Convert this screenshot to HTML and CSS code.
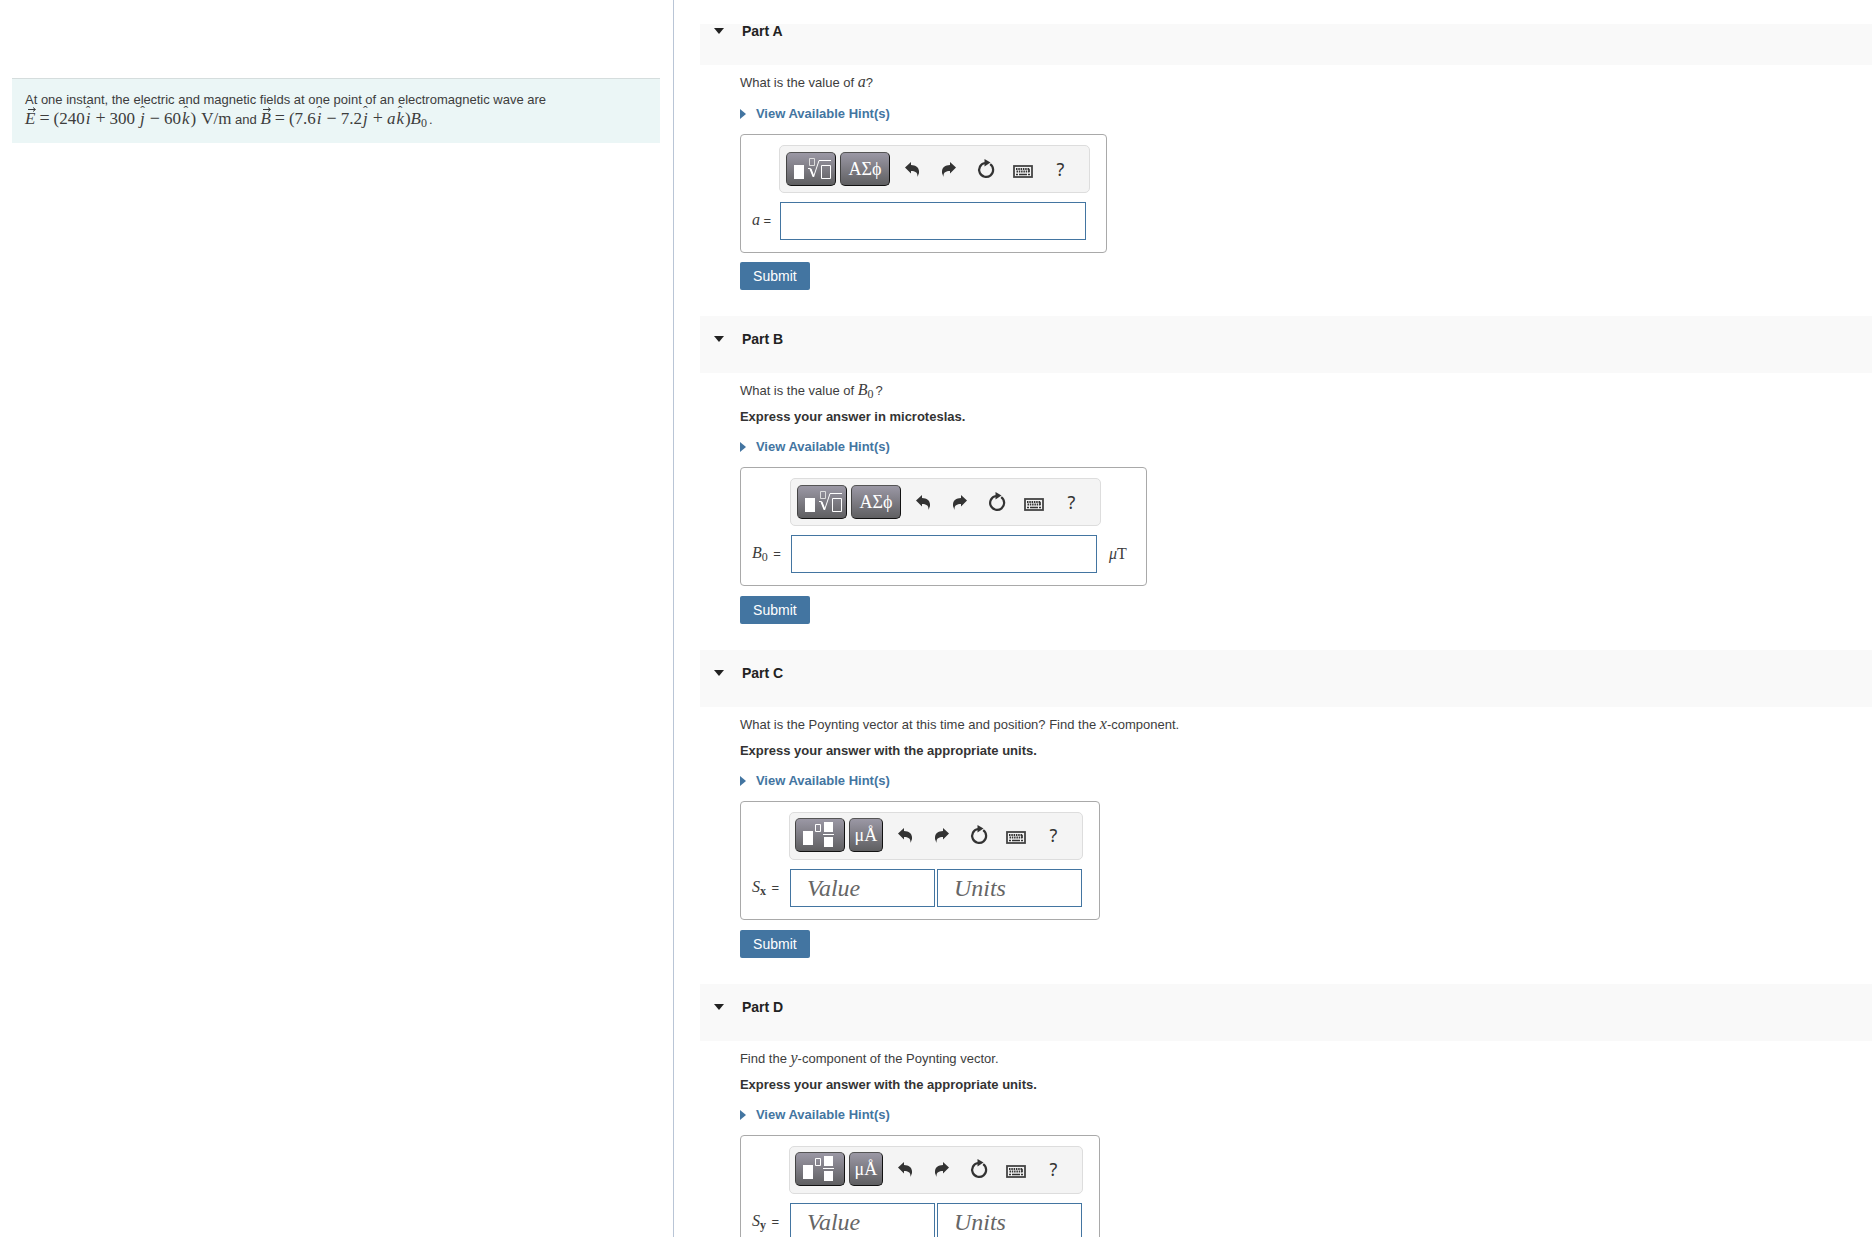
FILE: index.html
```html
<!DOCTYPE html>
<html lang="en">
<head>
<meta charset="utf-8">
<title>Electromagnetic wave problem</title>
<link rel="stylesheet" href="styles.css">
</head>
<body>
<svg class="defs" aria-hidden="true">
  <symbol id="undo" viewBox="0 0 14 15"><path d="M0 5.500 6 0v3c6 .3 8.500 3.500 8 8L12.500 15c.3-4.500-2-6-6.500-6v2.500z"/></symbol>
  <symbol id="redo" viewBox="0 0 14 15"><path d="M14 5.500 8 0v3C2 3.300-.5 6.500 0 11L1.500 15c-.3-4.500 2-6 6.500-6v2.500z"/></symbol>
  <symbol id="reset" viewBox="0 0 18 20"><path d="M13.200 5.200A7 7 0 1 1 8 4" fill="none" stroke="#333" stroke-width="2.200"/><path d="M7.500 0l6 3.500-6 4z"/></symbol>
  <symbol id="keyboard" viewBox="0 0 20 13"><rect x="1" y="1" width="18" height="11" fill="none" stroke="#444" stroke-width="1.800"/><path d="M3 4h14M3.500 6.500h13" fill="none" stroke="#333" stroke-width="1.800" stroke-dasharray="1.500 .8"/><path d="M3 9.500h2M6 9.500h8M15 9.500h2M16 4v3" fill="none" stroke="#333" stroke-width="1.500"/></symbol>
  <symbol id="root" viewBox="0 0 50 34"><path d="M8 13h10v14H8z" fill="#fff"/><g fill="none" stroke="#fff"><path d="M23.500 6.500h5v7h-5z" stroke="#ddd"/><path d="M35.500 13.500h9v13h-9z"/><path d="M22 16.500h2.500L27.500 25 33 8.500h12"/><path d="M24.500 17l3 7.500" stroke-width="2"/></g></symbol>
  <symbol id="templates" viewBox="0 0 50 34"><path d="M8 13h10v14H8zM29 4h9v10h-9zM29 19h9v10h-9z" fill="#fff"/><path d="M20.500 6.500h5v7h-5zM28 16.500h11" fill="none" stroke="#fff"/></symbol>
  <symbol id="vector" viewBox="0 0 8 5"><path d="M0 2.500h7M5 .5l2.500 2L5 4.500" fill="none" stroke="#3d3d3d"/></symbol>
</svg>
<div class="shell">
  <aside class="problem">
    <div class="intro">
      At one instant, the electric and magnetic fields at one point of an electromagnetic wave are<br>
      <span class="math"><i class="vec">E<svg><use href="#vector"/></svg></i><span class="op">=</span>(240<i class="hat">i</i><span class="op">+</span>300<i class="hat wide">j</i><span class="op">−</span>60<i class="hat">k</i>)<span class="unit">V/m</span></span> and
      <span class="math"><i class="vec">B<svg><use href="#vector"/></svg></i><span class="op">=</span>(7.6<i class="hat">i</i><span class="op">−</span>7.2<i class="hat">j</i><span class="op">+</span><i>a</i><i class="hat">k</i>)<i>B</i><sub>0</sub></span>.
    </div>
  </aside>
  <main class="parts">
    <section>
      <h2 class="head first"><span class="caret"></span>Part A</h2>
      <div class="body">
        <p>What is the value of <i class="math">a</i>?</p>
        <a class="hint" href="#">View Available Hint(s)</a>
        <div class="answer symbol-a">
          <div class="toolbar">
            <button class="pad" aria-label="Templates"><svg><use href="#root"/></svg></button>
            <button class="pad">ΑΣϕ</button>
            <span class="tools">
              <button class="tool" aria-label="Undo"><svg class="arrow"><use href="#undo"/></svg></button>
              <button class="tool" aria-label="Redo"><svg class="arrow"><use href="#redo"/></svg></button>
              <button class="tool" aria-label="Reset"><svg class="reset"><use href="#reset"/></svg></button>
              <button class="tool" aria-label="Keyboard"><svg class="keys"><use href="#keyboard"/></svg></button>
              <button class="tool">?</button>
            </span>
          </div>
          <label for="a"><i class="math">a</i> =</label>
          <div class="fields"><input id="a" type="text"></div>
        </div>
        <button class="submit">Submit</button>
      </div>
    </section>
    <section>
      <h2 class="head"><span class="caret"></span>Part B</h2>
      <div class="body">
        <p>What is the value of <span class="math"><i>B</i><sub>0</sub></span>?</p>
        <p class="strong">Express your answer in microteslas.</p>
        <a class="hint" href="#">View Available Hint(s)</a>
        <div class="answer symbol-b">
          <div class="toolbar">
            <button class="pad" aria-label="Templates"><svg><use href="#root"/></svg></button>
            <button class="pad">ΑΣϕ</button>
            <span class="tools">
              <button class="tool" aria-label="Undo"><svg class="arrow"><use href="#undo"/></svg></button>
              <button class="tool" aria-label="Redo"><svg class="arrow"><use href="#redo"/></svg></button>
              <button class="tool" aria-label="Reset"><svg class="reset"><use href="#reset"/></svg></button>
              <button class="tool" aria-label="Keyboard"><svg class="keys"><use href="#keyboard"/></svg></button>
              <button class="tool">?</button>
            </span>
          </div>
          <label for="b"><span class="math"><i>B</i><sub>0</sub></span> =</label>
          <div class="fields"><input id="b" type="text"></div>
          <span class="math suffix"><i>μ</i>T</span>
        </div>
        <button class="submit">Submit</button>
      </div>
    </section>
    <section>
      <h2 class="head"><span class="caret"></span>Part C</h2>
      <div class="body">
        <p>What is the Poynting vector at this time and position? Find the <i class="math">x</i>-component.</p>
        <p class="strong">Express your answer with the appropriate units.</p>
        <a class="hint" href="#">View Available Hint(s)</a>
        <div class="answer symbol-s">
          <div class="toolbar">
            <button class="pad" aria-label="Templates"><svg><use href="#templates"/></svg></button>
            <button class="pad narrow">μÅ</button>
            <span class="tools">
              <button class="tool" aria-label="Undo"><svg class="arrow"><use href="#undo"/></svg></button>
              <button class="tool" aria-label="Redo"><svg class="arrow"><use href="#redo"/></svg></button>
              <button class="tool" aria-label="Reset"><svg class="reset"><use href="#reset"/></svg></button>
              <button class="tool" aria-label="Keyboard"><svg class="keys"><use href="#keyboard"/></svg></button>
              <button class="tool">?</button>
            </span>
          </div>
          <label for="sx"><span class="math"><i>S</i><sub class="bold">x</sub></span> =</label>
          <div class="fields"><input id="sx" type="text" placeholder="Value"><input type="text" placeholder="Units" aria-label="Units"></div>
        </div>
        <button class="submit">Submit</button>
      </div>
    </section>
    <section>
      <h2 class="head"><span class="caret"></span>Part D</h2>
      <div class="body">
        <p>Find the <i class="math">y</i>-component of the Poynting vector.</p>
        <p class="strong">Express your answer with the appropriate units.</p>
        <a class="hint" href="#">View Available Hint(s)</a>
        <div class="answer symbol-s">
          <div class="toolbar">
            <button class="pad" aria-label="Templates"><svg><use href="#templates"/></svg></button>
            <button class="pad narrow">μÅ</button>
            <span class="tools">
              <button class="tool" aria-label="Undo"><svg class="arrow"><use href="#undo"/></svg></button>
              <button class="tool" aria-label="Redo"><svg class="arrow"><use href="#redo"/></svg></button>
              <button class="tool" aria-label="Reset"><svg class="reset"><use href="#reset"/></svg></button>
              <button class="tool" aria-label="Keyboard"><svg class="keys"><use href="#keyboard"/></svg></button>
              <button class="tool">?</button>
            </span>
          </div>
          <label for="sy"><span class="math"><i>S</i><sub class="bold">y</sub></span> =</label>
          <div class="fields"><input id="sy" type="text" placeholder="Value"><input type="text" placeholder="Units" aria-label="Units"></div>
        </div>
      </div>
    </section>
  </main>
</div>
</body>
</html>
```
FILE: styles.css
```css
* { box-sizing: border-box; }
body { margin: 0; background: #fff; color: #3d3d3d; font: 13px/20px "Liberation Sans", Arial, sans-serif; }
button { font: inherit; border: 0; padding: 0; cursor: pointer; }
.defs { display: none; }
.shell { display: grid; grid-template-columns: 36fr 64fr; height: 100vh; overflow: hidden; }

.problem { border-right: 1px solid #b9c5d6; padding: 78px 13px 0 12px; }
.intro { background: #ebf6f6; border-top: 1px solid #d5dddd; padding: 11px 12px 13px 13px; }

.math { font-family: "Liberation Serif", "Times New Roman", serif; font-size: 16px; line-height: 16px; white-space: nowrap; }
.intro .math { font-size: 17px; }
.math sub { margin-right: 2px; font-size: 12px; line-height: 0; vertical-align: -3px; }
.math .bold { font-weight: bold; }
.op { margin: 0 4px; font-size: 18px; line-height: 16px; }
.unit { margin-left: 5px; }
.vec, .hat { position: relative; display: inline-block; }
.hat { margin: 0 1px; }
.wide { margin-left: 5px; }
.vec svg { position: absolute; top: -4px; left: 3px; width: 8px; height: 5px; }
.hat::before { content: "ˆ"; position: absolute; top: -4px; left: 0; right: 0; font-size: 14px; font-style: normal; line-height: 10px; text-align: center; }

.parts { padding: 24px 0 0 26px; overflow: hidden; }
.head { display: flex; align-items: center; margin: 0; height: 57px; padding: 0 0 11px 14px; background: #f9f9f9; color: #222; font-size: 14px; line-height: 20px; }
.head.first { height: 41px; padding-bottom: 27px; }
.caret { width: 10px; margin-right: 18px; border: 5px solid transparent; border-top: 6px solid #222; border-bottom: 0; }
.body { padding: 8px 40px 26px; }
.body p { height: 20px; margin: 0 0 6px; }
.strong { font-weight: bold; color: #333; }
.hint { display: flex; align-items: center; gap: 10px; margin: 11px 0 10px; color: #4375a1; font-weight: bold; text-decoration: none; }
.strong ~ .hint { margin-top: 10px; }
.hint::before { content: ""; border: 5px solid transparent; border-left: 6px solid #4375a1; border-right: 0; }

.answer { display: grid; width: max-content; height: 119px; align-content: start; row-gap: 9px; padding: 10px 16px 0 11px; border: 1px solid #a9a9a9; border-radius: 4px; }
.symbol-a { grid-template-columns: 27px auto; }
.symbol-b { grid-template-columns: 38px auto 29px; }
.symbol-s { grid-template-columns: 37px auto; }
.toolbar { grid-column: 2; display: flex; gap: 4px; height: 48px; padding: 6px 8px 0 6px; background: #f4f4f4; border: 1px solid #ddd; border-radius: 5px; }
.symbol-s .toolbar { padding: 5px 9px 0 5px; }
.pad { display: flex; align-items: center; justify-content: center; width: 50px; height: 34px; border: 1px solid #111; border-top-color: #555; border-left-color: #444; border-radius: 5px; background: linear-gradient(#9b98a5, #5f5f61); color: #fff; font: 18px/20px "Liberation Serif", serif; }
.pad svg { flex: none; width: 50px; height: 34px; }
.narrow { width: 34px; }
.tools { display: flex; }
.tool { display: flex; align-items: center; justify-content: center; width: 37px; height: 34px; background: none; color: #333; fill: #333; font: 18px/20px "Noto Sans", sans-serif; }
.arrow { width: 14px; height: 15px; }
.reset { width: 18px; height: 20px; }
.keys { width: 20px; height: 13px; margin-top: 4px; }
.answer label { grid-column: 1; align-self: center; white-space: nowrap; }
.fields { display: flex; gap: 2px; margin: 0 4px 0 1px; }
.fields input { width: 306px; height: 38px; padding: 0 16px; border: 1px solid #4375a1; border-radius: 0; background: #fff; color: #333; font: italic 24px "Liberation Serif", serif; }
.symbol-s .fields input { width: 145px; }
.symbol-s .fields { margin-right: 1px; }
.fields input::placeholder { color: #666; opacity: 1; }
.suffix { align-self: center; padding-left: 8px; }
.submit { display: block; width: 70px; height: 28px; margin-top: 9px; border-radius: 2px; background: #4375a1; color: #fff; font-size: 14px; }
.strong ~ .submit { margin-top: 10px; }
```
